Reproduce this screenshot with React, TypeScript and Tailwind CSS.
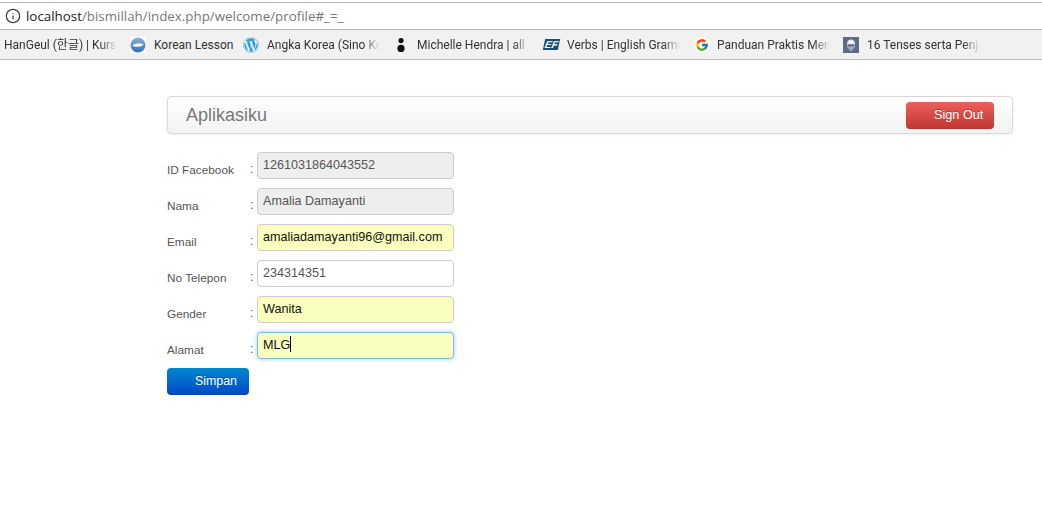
import React from 'react';
import { Info } from 'lucide-react';
import { FaWordpress } from 'react-icons/fa';
import { FcGoogle } from 'react-icons/fc';

// Favicons for the bookmark bar
const KoreanIcon = () => (
  <svg width="16" height="16" viewBox="0 0 16 16">
    <defs>
      <linearGradient id="kl" x1="0" y1="0" x2="0" y2="1">
        <stop offset="0" stopColor="#8fb4dc" />
        <stop offset="1" stopColor="#2f6fb5" />
      </linearGradient>
    </defs>
    <rect width="16" height="16" fill="#ffffff" />
    <circle cx="8" cy="8" r="7.5" fill="url(#kl)" />
    <path d="M2.5 8.5C4.5 6 11.5 6 13.5 7.5C11.5 10 4.5 10.5 2.5 8.5z" fill="#fff" />
  </svg>
);

const PersonIcon = () => (
  <svg width="16" height="16" viewBox="0 0 16 16">
    <circle cx="8" cy="3.6" r="2.6" fill="#111" />
    <circle cx="8" cy="11.4" r="3.6" fill="#111" />
  </svg>
);

const EfIcon = () => (
  <div className="w-4 h-4 flex items-center justify-center">
    <div className="w-[15px] h-[11px] bg-[#1c4e73] -skew-x-12 flex items-center justify-center text-white text-[10px] leading-none font-bold italic font-['Liberation_Sans',sans-serif]">
      EF
    </div>
  </div>
);

const OwlIcon = () => (
  <svg width="16" height="16" viewBox="0 0 16 16">
    <rect width="16" height="16" fill="#5f6b85" />
    <path d="M4 7a4 4.5 0 0 1 8 0z" fill="#eef0f4" />
    <path d="M4 7h8v3l-4 4.5L4 10z" fill="#a4abba" />
    <rect x="5" y="7.5" width="6" height="2" fill="#5f6b85" />
  </svg>
);

const bookmarks = [
  { icon: <KoreanIcon />, title: 'Korean Lesson', text: 'w-[76px]', gap: 'mr-[13px]', iconGap: 'mr-2', fade: '' },
  { icon: <FaWordpress size={16} className="text-[#2a9fd6]" />, title: 'Angka Korea (Sino Ko', text: 'w-[113px]', gap: 'mr-[13px]', iconGap: 'mr-2', fade: 'fade' },
  { icon: <PersonIcon />, title: 'Michelle Hendra | all', text: 'w-[113px]', gap: 'mr-[13px]', iconGap: 'mr-2', fade: 'fade' },
  { icon: <EfIcon />, title: 'Verbs | English Gramr', text: 'w-[113px]', gap: 'mr-[14px]', iconGap: 'mr-2', fade: 'fade' },
  { icon: <div className="w-4 h-4 rounded-full bg-white flex items-center justify-center"><FcGoogle size={14} /></div>, title: 'Panduan Praktis Men', text: 'w-[113px]', gap: 'mr-[13px]', iconGap: 'mr-[7px]', fade: 'fade' },
  { icon: <OwlIcon />, title: '16 Tenses serta Penje', text: 'w-[113px]', gap: '', iconGap: 'mr-2', fade: 'fade' },
];

const fields = [
  { label: 'ID Facebook', value: '1261031864043552', kind: 'disabled' },
  { label: 'Nama', value: 'Amalia Damayanti', kind: 'disabled' },
  { label: 'Email', value: 'amaliadamayanti96@gmail.com', kind: 'filled' },
  { label: 'No Telepon', value: '234314351', kind: 'plain' },
  { label: 'Gender', value: 'Wanita', kind: 'filled' },
  { label: 'Alamat', value: 'MLG', kind: 'focus' },
];

const inputStyles: Record<string, string> = {
  disabled: 'bg-[#eeeeee] border-[#cccccc] text-[#555555]',
  plain: 'bg-white border-[#cccccc] text-[#555555]',
  filled: 'bg-[#faffbd] border-[#cccccc] text-[#111111]',
  focus: 'bg-[#faffbd] border-[#7fbde8] text-[#111111] shadow-[0_0_4px_rgba(82,168,236,0.6)]',
};

const Field = ({ label, value, kind }: { label: string; value: string; kind: string }) => (
  <div className="flex h-[27px] mb-[9px]">
    <div className="w-[83px] pt-[11px] text-[11.8px] leading-[14px] text-[#555555]">{label}</div>
    <div className="w-[7px] pt-[10px] text-[12px] leading-[14px] text-[#555555]">:</div>
    <div className={`w-[197px] h-[27px] rounded-[4px] border pl-[5px] pt-[3px] text-[12.6px] leading-[18px] ${inputStyles[kind]}`}>
      {value}
      {kind === 'focus' && <span className="inline-block w-px h-[16px] bg-black align-[-3px]" />}
    </div>
  </div>
);

export default function App() {
  return (
    <div className="min-h-[531px] bg-white font-['Liberation_Sans',Arial,sans-serif]">
      {/* Browser chrome */}
      <div className="pt-[2px] font-['Open_Sans','Noto_Sans_CJK_KR',sans-serif]">
        <div className="h-[28px] border-y border-[#b4b4b4] flex items-center pl-[5px]">
          <Info size={16} strokeWidth={2} className="text-[#444444]" />
          <div className="ml-[5px] text-[13.35px] whitespace-nowrap text-[#777777]">
            <span className="text-[#222222]">localhost</span>/bismillah/index.php/welcome/profile#_=_
          </div>
        </div>
        <div className="h-[30px] bg-[#f1f1f1] border-b border-[#b8b8b8] flex items-center pl-[4px] text-[12px] text-[#333333] font-['Roboto','Noto_Sans_CJK_KR',sans-serif]">
          <div className="w-[113px] mr-[13px] whitespace-nowrap [mask-image:linear-gradient(to_right,black_85%,transparent)]">
            HanGeul (한글) | Kurs
          </div>
          {bookmarks.map((b) => (
            <div key={b.title} className={`flex items-center shrink-0 ${b.gap}`}>
              <div className={`w-4 h-4 shrink-0 ${b.iconGap}`}>{b.icon}</div>
              <div className={`${b.text} whitespace-nowrap ${b.fade ? '[mask-image:linear-gradient(to_right,black_85%,transparent)]' : ''}`}>
                {b.title}
              </div>
            </div>
          ))}
        </div>
      </div>

      {/* Page */}
      <div className="pl-[167px] pr-[29px] pt-[36px]">
        <div className="h-[38px] rounded-[4px] border border-[#d8d8d8] bg-gradient-to-b from-white to-[#f2f2f2] shadow-[0_1px_3px_rgba(0,0,0,0.06)] flex items-center justify-between pl-[18px] pr-[18px]">
          <div className="text-[18px] text-[#777777]">Aplikasiku</div>
          <div className="w-[88px] h-[27px] rounded-[4px] bg-gradient-to-b from-[#ee5f5b] to-[#bd362f] text-white text-[12.7px] leading-[26px] pl-[28px] [text-shadow:0_-1px_0_rgba(0,0,0,0.25)]">
            Sign Out
          </div>
        </div>

        <div className="pt-[18px]">
          {fields.map((f) => (
            <Field key={f.label} {...f} />
          ))}
          <div className="w-[82px] h-[27px] rounded-[4px] bg-gradient-to-b from-[#0088cc] to-[#0044cc] text-white text-[12.4px] leading-[27px] pl-[28px] [text-shadow:0_-1px_0_rgba(0,0,0,0.25)]">
            Simpan
          </div>
        </div>
      </div>
    </div>
  );
}
